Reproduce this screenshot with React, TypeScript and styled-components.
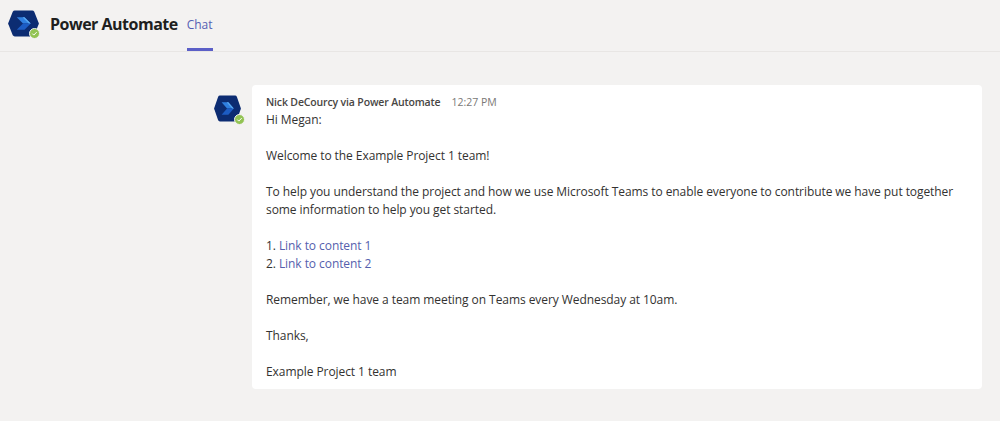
import React from "react";
import styled, { createGlobalStyle } from "styled-components";

const Global = createGlobalStyle`
  html, body {
    margin: 0;
    padding: 0;
    background: #f3f2f1;
  }
  body {
    font-family: "Open Sans", "Noto Sans", sans-serif;
    color: #252423;
  }
`;

const Page = styled.div`
  width: 1000px;
  height: 421px;
  overflow: hidden;
  background: #f3f2f1;
`;

const Header = styled.header`
  height: 52px;
  box-sizing: border-box;
  display: flex;
  align-items: stretch;
  padding-left: 8px;
  border-bottom: 1px solid #e8e6e4;
`;

const HeaderIcon = styled.div`
  width: 32px;
  margin-top: 10px;
`;

const Title = styled.h1`
  margin: 0 0 0 10px;
  font-size: 16px;
  font-weight: 700;
  line-height: 49px;
  color: #201f1e;
  letter-spacing: -0.5px;
`;

const Tab = styled.div`
  margin-left: 9px;
  width: 26px;
  height: 51px;
  box-sizing: border-box;
  border-bottom: 3px solid #5b5fc7;
  font-size: 12px;
  line-height: 49px;
  color: #5560b4;
  white-space: nowrap;
`;

const Thread = styled.main`
  display: flex;
  align-items: flex-start;
  padding: 33px 18px 0 214px;
`;

const AvatarBox = styled.div`
  width: 30px;
  margin-top: 10px;
  flex: none;
`;

const Card = styled.article`
  margin-left: 8px;
  width: 730px;
  height: 304px;
  box-sizing: border-box;
  padding: 9px 14px 0;
  background: #fff;
  border-radius: 4px;
`;

const Meta = styled.div`
  display: flex;
  align-items: baseline;
  height: 17px;
  line-height: 16px;
`;

const Author = styled.span`
  font-size: 10.5px;
  font-weight: 600;
  color: #484644;
  letter-spacing: -0.15px;
`;

const Time = styled.time`
  margin-left: 11px;
  font-size: 10.5px;
  color: #7a7876;
`;

const Body = styled.div`
  font-size: 12px;
  line-height: 18px;
  letter-spacing: -0.07px;
  color: #333231;
`;

const Line = styled.p<{ $gap?: boolean }>`
  margin: ${(p) => (p.$gap ? "18px" : "0")} 0 0;
`;

const Link = styled.a`
  color: #5560ad;
  text-decoration: none;
`;

const IconWrap = styled.div<{ $w: number }>`
  position: relative;
  width: ${(p) => p.$w}px;
  height: 27px;
`;

const Badge = styled.span<{ $right: number; $bottom: number }>`
  position: absolute;
  right: ${(p) => p.$right}px;
  bottom: ${(p) => p.$bottom}px;
  width: 9px;
  height: 9px;
  border-radius: 50%;
  background: #92c353;
  border: 1px solid #f3f2f1;
  display: flex;
  align-items: center;
  justify-content: center;
`;

const FlowIcon = ({ w, right, bottom }: { w: number; right: number; bottom: number }) => (
  <IconWrap $w={w}>
    <svg width={w} height={27} viewBox="0 0 32 28" preserveAspectRatio="none" style={{ display: "block" }}>
      <path d="M7 .5h18a2.500 2.500 0 0 1 2.100 1.200l4.300 10.900a2.500 2.500 0 0 1 0 2.800l-4.300 10.900a2.500 2.500 0 0 1-2.100 1.200H7a2.500 2.500 0 0 1-2.100-1.200L.6 15.400a2.500 2.500 0 0 1 0-2.800L4.900 1.700A2.500 2.500 0 0 1 7 .5z" fill="#0c2c72" />
      <path d="M9 7.500h8l6.500 6.500h-8z" fill="#2f7fe0" />
      <path d="M9 20.500l6.500-6.500h8l-6.500 6.500z" fill="#1c5cc4" />
      <path d="M15 7.500h2l6.500 6.500h-2z" fill="#5aa9f0" />
    </svg>
    <Badge $right={right} $bottom={bottom}>
      <svg width="7" height="7" viewBox="0 0 7 7">
        <path d="M1.300 3.600l1.500 1.500 2.900-3" fill="none" stroke="#fff" strokeWidth="1" />
      </svg>
    </Badge>
  </IconWrap>
);

export default function App() {
  return (
    <Page>
      <Global />
      <Header>
        <HeaderIcon>
          <FlowIcon w={31} right={-0.5} bottom={-1.5} />
        </HeaderIcon>
        <Title>Power Automate</Title>
        <Tab>Chat</Tab>
      </Header>
      <Thread>
        <AvatarBox>
          <FlowIcon w={27} right={-3.5} bottom={-2.5} />
        </AvatarBox>
        <Card>
          <Meta>
            <Author>Nick DeCourcy via Power Automate</Author>
            <Time>12:27 PM</Time>
          </Meta>
          <Body>
            <Line>Hi Megan:</Line>
            <Line $gap>Welcome to the Example Project 1 team!</Line>
            <Line $gap>
              To help you understand the project and how we use Microsoft Teams to enable everyone to contribute we have put together
              some information to help you get started.
            </Line>
            <Line $gap>
              1. <Link href="#">Link to content 1</Link>
            </Line>
            <Line>
              2. <Link href="#">Link to content 2</Link>
            </Line>
            <Line $gap>Remember, we have a team meeting on Teams every Wednesday at 10am.</Line>
            <Line $gap>Thanks,</Line>
            <Line $gap>Example Project 1 team</Line>
          </Body>
        </Card>
      </Thread>
    </Page>
  );
}
